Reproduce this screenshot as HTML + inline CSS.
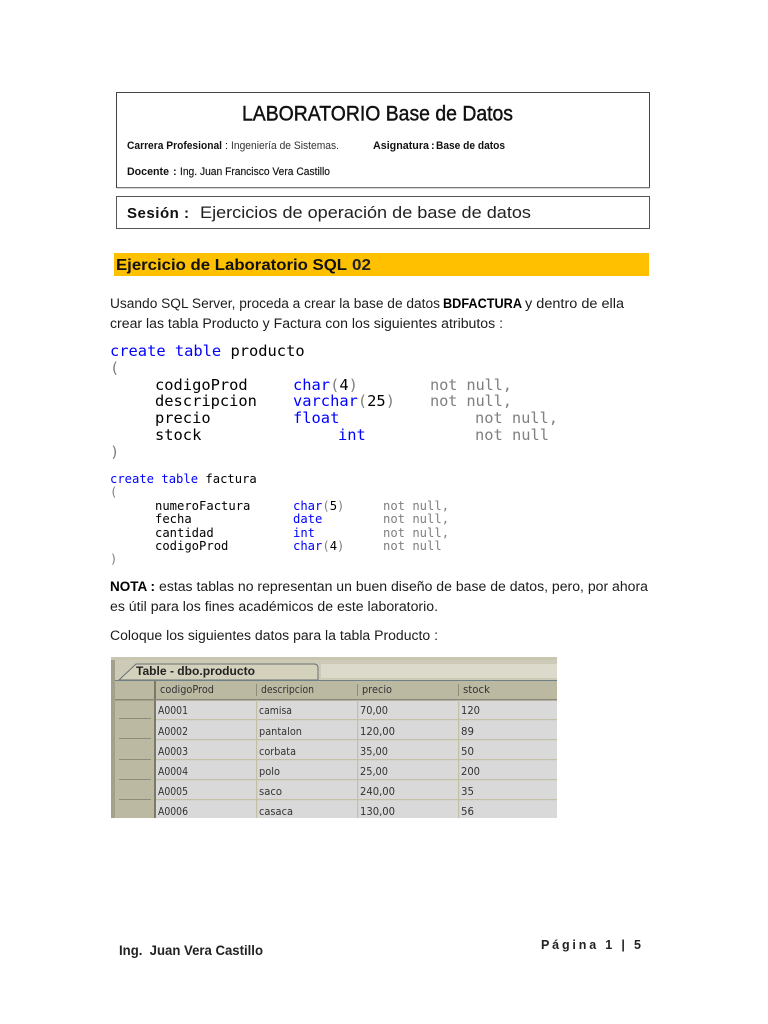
<!DOCTYPE html>
<html lang="es">
<head>
<meta charset="utf-8">
<title>Laboratorio Base de Datos</title>
<style>
html,body{margin:0;padding:0;background:#fff;width:768px;height:1024px;overflow:hidden}
svg{display:block}
text{white-space:pre}
.a{font-family:"Liberation Sans",sans-serif;fill:#111}
.h{stroke:#111;stroke-width:.25px}
.c{font-family:"Liberation Sans",sans-serif;fill:#1c1c1c;font-size:13.5px}
.cb{font-family:"Liberation Sans",sans-serif;fill:#000;font-size:14px;font-weight:bold}
.m1{font-family:"DejaVu Sans Mono",monospace;font-size:15.4px;fill:#000}
.m2{font-family:"DejaVu Sans Mono",monospace;font-size:12.2px;fill:#000}
.b{fill:#0000ff}.g{fill:#808080}
.t{font-family:"DejaVu Sans",sans-serif;font-size:10.5px;fill:#333}
.soft{filter:blur(.35px)}
</style>
</head>
<body>
<svg width="768" height="1024" viewBox="0 0 768 1024" xmlns="http://www.w3.org/2000/svg">
<rect width="768" height="1024" fill="#fff"/>

<g class="soft">
<!-- Header box -->
<rect x="116.500" y="92.500" width="533" height="95" fill="#fff" stroke="#444"/>
<line x1="117" y1="188" x2="650" y2="188" stroke="#aaa"/>
<text class="a h" x="242" y="120.500" font-size="21.500" textLength="271" lengthAdjust="spacingAndGlyphs" style="stroke-width:.45px">LABORATORIO Base de Datos</text>
<text class="a" x="127" y="149" font-size="10.800" font-weight="bold" textLength="95" lengthAdjust="spacingAndGlyphs">Carrera Profesional</text>
<text class="a" x="225" y="149" font-size="10.800">:</text>
<text class="a" x="231" y="149" font-size="10.800" textLength="108" lengthAdjust="spacingAndGlyphs" style="fill:#333">Ingeniería de Sistemas.</text>
<text class="a" x="373" y="149" font-size="10.800" font-weight="bold" textLength="56" lengthAdjust="spacingAndGlyphs">Asignatura</text>
<text class="a" x="431" y="149" font-size="10.800" font-weight="bold">:</text>
<text class="a" x="436" y="149" font-size="10.800" font-weight="bold" textLength="69" lengthAdjust="spacingAndGlyphs">Base de datos</text>
<text class="a" x="127" y="175" font-size="10.800" font-weight="bold" textLength="42" lengthAdjust="spacingAndGlyphs">Docente</text>
<text class="a" x="173" y="175" font-size="10.800" font-weight="bold">:</text>
<text class="a h" x="180" y="175" font-size="10.800" textLength="150" lengthAdjust="spacingAndGlyphs" style="stroke-width:.15px">Ing. Juan Francisco Vera Castillo</text>

<!-- Session box -->
<rect x="116.500" y="196.500" width="533" height="32" fill="#fff" stroke="#555"/>
<text class="a" x="127" y="218" font-size="15" font-weight="bold" textLength="62" lengthAdjust="spacing">Sesión :</text>
<text class="a" x="200" y="218" font-size="17" textLength="331" lengthAdjust="spacingAndGlyphs" style="fill:#222">Ejercicios de operación de base de datos</text>

<!-- Banner -->
<rect x="114" y="253" width="535" height="23" fill="#ffc000"/>
<text class="a" x="116" y="270" font-size="16" font-weight="bold" textLength="231" lengthAdjust="spacingAndGlyphs">Ejercicio de Laboratorio SQL</text>
<text class="a" x="352" y="270" font-size="16" font-weight="bold" textLength="19" lengthAdjust="spacingAndGlyphs" style="fill:#222">02</text>
</g>

<!-- Paragraph 1 -->
<text class="c" x="110" y="308" textLength="330" lengthAdjust="spacingAndGlyphs">Usando SQL Server, proceda a crear la base de datos</text>
<text class="cb" x="443" y="308" textLength="79" lengthAdjust="spacingAndGlyphs">BDFACTURA</text>
<text class="c" x="525" y="308" textLength="99" lengthAdjust="spacingAndGlyphs">y dentro de ella</text>
<text class="c" x="110" y="328" textLength="393" lengthAdjust="spacingAndGlyphs">crear las tabla Producto y Factura con los siguientes atributos :</text>

<!-- SQL 1 -->
<text class="m1" x="110" y="356"><tspan class="b">create table</tspan> producto</text>
<text class="m1 g" x="110" y="373">(</text>
<text class="m1" x="155" y="390">codigoProd</text>
<text class="m1" x="293" y="390"><tspan class="b">char</tspan><tspan class="g">(</tspan>4<tspan class="g">)</tspan></text>
<text class="m1 g" x="430" y="390" textLength="82">not null,</text>
<text class="m1" x="155" y="406">descripcion</text>
<text class="m1" x="293" y="406"><tspan class="b">varchar</tspan><tspan class="g">(</tspan>25<tspan class="g">)</tspan></text>
<text class="m1 g" x="430" y="406" textLength="82">not null,</text>
<text class="m1" x="155" y="423">precio</text>
<text class="m1 b" x="293" y="423">float</text>
<text class="m1 g" x="475" y="423" textLength="83">not null,</text>
<text class="m1" x="155" y="440">stock</text>
<text class="m1 b" x="338" y="440">int</text>
<text class="m1 g" x="475" y="440" textLength="74">not null</text>
<text class="m1 g" x="110" y="457">)</text>

<!-- SQL 2 -->
<text class="m2" x="110" y="483"><tspan class="b">create table</tspan> factura</text>
<text class="m2 g" x="110" y="496">(</text>
<text class="m2" x="155" y="510">numeroFactura</text>
<text class="m2" x="293" y="510"><tspan class="b">char</tspan><tspan class="g">(</tspan>5<tspan class="g">)</tspan></text>
<text class="m2 g" x="383" y="510">not null,</text>
<text class="m2" x="155" y="523">fecha</text>
<text class="m2 b" x="293" y="523">date</text>
<text class="m2 g" x="383" y="523">not null,</text>
<text class="m2" x="155" y="537">cantidad</text>
<text class="m2 b" x="293" y="537">int</text>
<text class="m2 g" x="383" y="537">not null,</text>
<text class="m2" x="155" y="550">codigoProd</text>
<text class="m2" x="293" y="550"><tspan class="b">char</tspan><tspan class="g">(</tspan>4<tspan class="g">)</tspan></text>
<text class="m2 g" x="383" y="550">not null</text>
<text class="m2 g" x="110" y="563">)</text>

<!-- Notes -->
<text class="cb" x="110" y="591" textLength="45" lengthAdjust="spacingAndGlyphs">NOTA :</text>
<text class="c" x="159" y="591" textLength="489" lengthAdjust="spacingAndGlyphs">estas tablas no representan un buen diseño de base de datos, pero, por ahora</text>
<text class="c" x="110" y="611" textLength="328" lengthAdjust="spacingAndGlyphs">es útil para los fines académicos de este laboratorio.</text>
<text class="c" x="110" y="640" textLength="328" lengthAdjust="spacingAndGlyphs">Coloque los siguientes datos para la tabla Producto :</text>

<!-- Table screenshot -->
<g class="soft">
<rect x="111" y="657" width="446" height="161" fill="#cdcbb8"/>
<rect x="111" y="657" width="446" height="3" fill="#c8c5b0"/>
<rect x="111" y="660" width="4" height="158" fill="#a3a08b"/>
<path d="M318 680V668Q318 664 314 664H136L119 680Z" fill="#d4d1bd" stroke="#6a7070" stroke-width="1"/>
<rect x="321" y="664" width="236" height="14" fill="#dcdacb"/>
<rect x="115" y="680" width="442" height="1" fill="#6f8088"/>
<rect x="115" y="681" width="442" height="19" fill="#bcb9a3"/>
<rect x="115" y="700" width="40" height="118" fill="#bcb9a3"/>
<rect x="154" y="681" width="2" height="137" fill="#7d7a64"/>
<rect x="115" y="699" width="442" height="1.500" fill="#8b8873"/>
<rect x="156" y="700.500" width="401" height="117.500" fill="#d9d9d9"/>
<g fill="#c4c0a6">
<rect x="156" y="719" width="401" height="1.200"/>
<rect x="156" y="739" width="401" height="1.200"/>
<rect x="156" y="759" width="401" height="1.200"/>
<rect x="156" y="779" width="401" height="1.200"/>
<rect x="156" y="799" width="401" height="1.200"/>
<rect x="256" y="700" width="1.200" height="118"/>
<rect x="357" y="700" width="1.200" height="118"/>
<rect x="458" y="700" width="1.200" height="118"/>
<rect x="256" y="684" width="1" height="12" fill="#8f8c78"/>
<rect x="357" y="684" width="1" height="12" fill="#8f8c78"/>
<rect x="458" y="684" width="1" height="12" fill="#8f8c78"/>
</g>
<g fill="#8f8c78">
<rect x="119" y="718" width="32" height="1"/>
<rect x="119" y="738" width="32" height="1"/>
<rect x="119" y="759" width="32" height="1"/>
<rect x="119" y="779" width="32" height="1"/>
<rect x="119" y="799" width="32" height="1"/>
</g>
<text class="a" x="136" y="675" font-size="11.500" font-weight="bold" textLength="119" lengthAdjust="spacingAndGlyphs" style="fill:#222">Table - dbo.producto</text>
<text class="t" x="160" y="693" textLength="54" lengthAdjust="spacingAndGlyphs">codigoProd</text>
<text class="t" x="261" y="693" textLength="53" lengthAdjust="spacingAndGlyphs">descripcion</text>
<text class="t" x="362" y="693" textLength="30" lengthAdjust="spacingAndGlyphs">precio</text>
<text class="t" x="463" y="693" textLength="27" lengthAdjust="spacingAndGlyphs">stock</text>

<text class="t" x="158" y="714" textLength="30" lengthAdjust="spacingAndGlyphs">A0001</text>
<text class="t" x="259" y="714" textLength="33" lengthAdjust="spacingAndGlyphs">camisa</text>
<text class="t" x="360" y="714" textLength="28" lengthAdjust="spacingAndGlyphs">70,00</text>
<text class="t" x="461" y="714" textLength="19" lengthAdjust="spacingAndGlyphs">120</text>

<text class="t" x="158" y="735" textLength="30" lengthAdjust="spacingAndGlyphs">A0002</text>
<text class="t" x="259" y="735" textLength="43" lengthAdjust="spacingAndGlyphs">pantalon</text>
<text class="t" x="360" y="735" textLength="35" lengthAdjust="spacingAndGlyphs">120,00</text>
<text class="t" x="461" y="735" textLength="13" lengthAdjust="spacingAndGlyphs">89</text>

<text class="t" x="158" y="755" textLength="30" lengthAdjust="spacingAndGlyphs">A0003</text>
<text class="t" x="259" y="755" textLength="37" lengthAdjust="spacingAndGlyphs">corbata</text>
<text class="t" x="360" y="755" textLength="28" lengthAdjust="spacingAndGlyphs">35,00</text>
<text class="t" x="461" y="755" textLength="13" lengthAdjust="spacingAndGlyphs">50</text>

<text class="t" x="158" y="775" textLength="30" lengthAdjust="spacingAndGlyphs">A0004</text>
<text class="t" x="259" y="775" textLength="21" lengthAdjust="spacingAndGlyphs">polo</text>
<text class="t" x="360" y="775" textLength="28" lengthAdjust="spacingAndGlyphs">25,00</text>
<text class="t" x="461" y="775" textLength="19" lengthAdjust="spacingAndGlyphs">200</text>

<text class="t" x="158" y="795" textLength="30" lengthAdjust="spacingAndGlyphs">A0005</text>
<text class="t" x="259" y="795" textLength="23" lengthAdjust="spacingAndGlyphs">saco</text>
<text class="t" x="360" y="795" textLength="35" lengthAdjust="spacingAndGlyphs">240,00</text>
<text class="t" x="461" y="795" textLength="13" lengthAdjust="spacingAndGlyphs">35</text>

<text class="t" x="158" y="815" textLength="30" lengthAdjust="spacingAndGlyphs">A0006</text>
<text class="t" x="259" y="815" textLength="34" lengthAdjust="spacingAndGlyphs">casaca</text>
<text class="t" x="360" y="815" textLength="35" lengthAdjust="spacingAndGlyphs">130,00</text>
<text class="t" x="461" y="815" textLength="13" lengthAdjust="spacingAndGlyphs">56</text>
</g>

<!-- Footer -->
<text class="cb" x="119" y="955" textLength="144" lengthAdjust="spacingAndGlyphs" style="font-size:13.500px;fill:#222">Ing.  Juan Vera Castillo</text>
<text class="cb" x="541" y="949" textLength="100" lengthAdjust="spacing" style="font-size:12.500px;fill:#222">Página 1 | 5</text>
</svg>
</body>
</html>
